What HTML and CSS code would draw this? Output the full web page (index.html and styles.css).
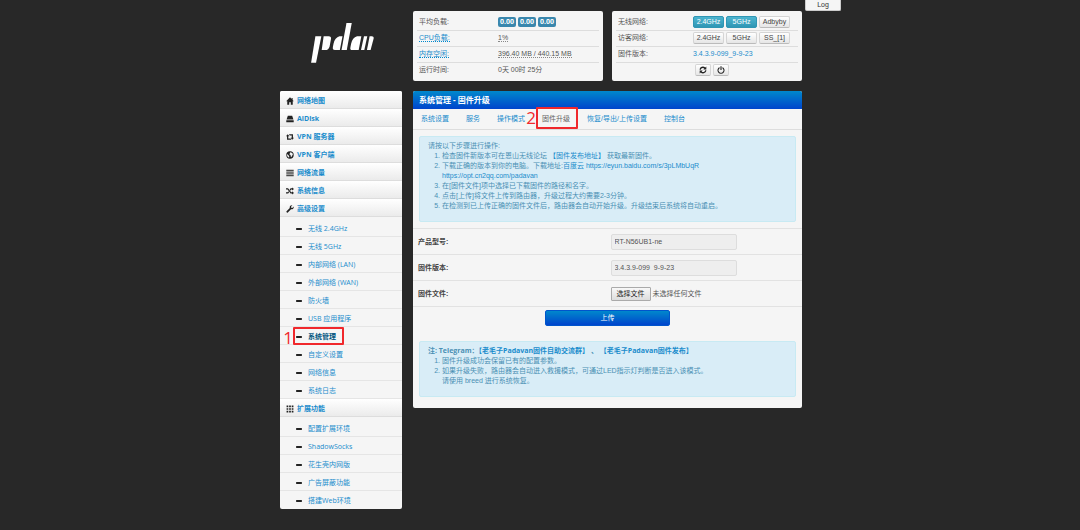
FILE: index.html
```
<!DOCTYPE html>
<html lang="zh-CN">
<head>
    <meta charset="UTF-8">
    <meta name="viewport" content="width=device-width, initial-scale=1.0">
    <title>系统管理 - 固件升级</title>
    <link rel="stylesheet" href="styles.css">
</head>
<body>

<!-- Icons -->
<svg class="sprite" viewBox="0 0 14 14">
    <symbol id="i-home" viewBox="0 0 14 14"><path d="M7 0.5 0.3 7.4H2.2V13.4H5.6V9H8.4V13.4H11.8V7.4H13.7L11.6 5.2V1.6H9.8V3.4Z"/></symbol>
    <symbol id="i-hdd" viewBox="0 0 14 14"><path d="M3.2 1.5H10.8L13 8H1ZM0.5 9H13.5V12.8H0.5Z"/></symbol>
    <symbol id="i-retweet" viewBox="0 0 14 14"><path d="M3 2.2 6 5.6H4V9.8H8L9.6 12H1.8V5.6H0ZM5 2.2H12.2V8.4H14L11 12 8 8.4H10V4.4H6.6Z"/></symbol>
    <symbol id="i-globe" viewBox="0 0 14 14"><path fill-rule="evenodd" d="M7 0.5A6.5 6.5 0 1 0 7 13.5 6.5 6.5 0 0 0 7 0.5ZM7.4 2.2 11 3.4 12 6.4 10.2 8.6 9.6 10.8 8 9.2 8.2 7.2 6 6.2 6.6 4.2ZM2 5.4 4.4 7.6 5.6 9.4 5.4 11.6 3 10 1.9 7.8Z"/></symbol>
    <symbol id="i-tasks" viewBox="0 0 14 14"><path d="M0.5 1.5H13.5V4.5H0.5ZM0.5 5.5H13.5V8.5H0.5ZM0.5 9.5H13.5V12.5H0.5Z" opacity="0.8"/></symbol>
    <symbol id="i-random" viewBox="0 0 14 14"><path d="M0 2.4H3.6L9 9.4H10.6V7.6L14 10.4 10.6 13.2V11.4H8L2.8 4.4H0ZM0 9.4H2.8L4.2 7.6 5.4 9.2 3.8 11.4H0ZM6.4 4.8 8 2.4H10.6V0.8L14 3.5 10.6 6.2V4.4H9L7.6 6.4Z"/></symbol>
    <symbol id="i-wrench" viewBox="0 0 14 14"><path d="M11.2 0.6 8.8 3 9.2 4.8 11 5.2 13.4 2.8C14 5.6 11.8 8.2 8.8 7.4L3.2 13C1.8 14.2-0.2 12.2 1 10.8L6.6 5.2C5.8 2.2 8.4 0 11.2 0.6Z"/></symbol>
    <symbol id="i-th" viewBox="0 0 14 14"><path d="M1 1H4V4H1ZM5.5 1H8.5V4H5.5ZM10 1H13V4H10ZM1 5.5H4V8.5H1ZM5.5 5.5H8.5V8.5H5.5ZM10 5.5H13V8.5H10ZM1 10H4V13H1ZM5.5 10H8.5V13H5.5ZM10 10H13V13H10Z"/></symbol>
    <symbol id="i-minus" viewBox="0 0 14 14"><path d="M2 5.2H12V8.8H2Z"/></symbol>
    <symbol id="i-refresh" viewBox="0 0 14 14"><path d="M1 6.4C1.4 1.4 7.6-0.8 11 2.8L12.8 1V6.2H7.6L9.4 4.4C7 2.2 3.4 3.6 3.2 6.4ZM13 7.6C12.6 12.6 6.4 14.8 3 11.2L1.2 13V7.8H6.4L4.6 9.6C7 11.8 10.6 10.4 10.8 7.6Z"/></symbol>
    <symbol id="i-off" viewBox="0 0 14 14"><path d="M6 0.4H8V7H6ZM4.4 1.8V4.2A4.2 4.2 0 1 0 9.6 4.2V1.8A6.2 6.2 0 1 1 4.4 1.8Z"/></symbol>
</svg>

<div class="wrapper">
    <button class="log-button" type="button">Log</button>

    <header class="header">
        <div class="logo">
            <svg viewBox="122 68 190 121" role="img" aria-label="pdcn">
                <path d="M135 108H153L137 188H122Z"/>
                <path d="M160 108H175Q184 108 182 117L178 139Q175 150 165 150H154Z"/>
                <path d="M208 108H217L209 150H194Q186 150 188 140L190 130Q194 112 208 108Z"/>
                <path d="M229 68H245L230 150H214Z"/>
                <path d="M261 108H274L266 150H246Q239 150 241 141L243 131Q247 112 261 108Z"/>
                <path d="M282 108H292L283 150H273Z"/>
                <path d="M299 108H306Q313 108 311 116L302 150H291Z"/>
            </svg>
        </div>

        <div class="status">
            <table class="status-table">
                <tr><th>平均负载:</th><td><span class="label">0.00</span> <span class="label">0.00</span> <span class="label">0.00</span></td></tr>
                <tr><th><a class="hint" href="#">CPU负载:</a></th><td><span class="hint">1%</span></td></tr>
                <tr><th><a class="hint" href="#">内存空闲:</a></th><td><span class="hint">396.40 MB / 440.15 MB</span></td></tr>
                <tr><th>运行时间:</th><td>0天 00时 25分</td></tr>
            </table>
        </div>

        <div class="status status-net">
            <table class="status-table">
                <tr>
                    <th>无线网络:</th>
                    <td><div class="buttons"><button class="mini info" type="button">2.4GHz</button><button class="mini info" type="button">5GHz</button><button class="mini" type="button">Adbyby</button></div></td>
                </tr>
                <tr>
                    <th>访客网络:</th>
                    <td><div class="buttons"><button class="mini" type="button">2.4GHz</button><button class="mini" type="button">5GHz</button><button class="mini" type="button">SS_[1]</button></div></td>
                </tr>
                <tr><th>固件版本:</th><td><a href="#">3.4.3.9-099_9-9-23</a></td></tr>
                <tr>
                    <th></th>
                    <td>
                        <div class="buttons tools">
                            <button class="mini square" type="button" aria-label="刷新"><svg class="icon"><use href="#i-refresh"/></svg></button>
                            <button class="mini square" type="button" aria-label="关机"><svg class="icon"><use href="#i-off"/></svg></button>
                        </div>
                    </td>
                </tr>
            </table>
        </div>
    </header>

    <div class="content">
        <nav class="sidebar">
            <ul class="menu">
                <li><a href="#"><svg class="icon"><use href="#i-home"/></svg>网络地图</a></li>
                <li><a href="#"><svg class="icon"><use href="#i-hdd"/></svg>AiDisk</a></li>
                <li><a href="#"><svg class="icon"><use href="#i-retweet"/></svg>VPN 服务器</a></li>
                <li><a href="#"><svg class="icon"><use href="#i-globe"/></svg>VPN 客户端</a></li>
                <li><a href="#"><svg class="icon"><use href="#i-tasks"/></svg>网络流量</a></li>
                <li><a href="#"><svg class="icon"><use href="#i-random"/></svg>系统信息</a></li>
                <li>
                    <a href="#"><svg class="icon"><use href="#i-wrench"/></svg>高级设置</a>
                    <ul class="submenu">
                        <li><a href="#"><svg class="icon"><use href="#i-minus"/></svg>无线 2.4GHz</a></li>
                        <li><a href="#"><svg class="icon"><use href="#i-minus"/></svg>无线 5GHz</a></li>
                        <li><a href="#"><svg class="icon"><use href="#i-minus"/></svg>内部网络 (LAN)</a></li>
                        <li><a href="#"><svg class="icon"><use href="#i-minus"/></svg>外部网络 (WAN)</a></li>
                        <li><a href="#"><svg class="icon"><use href="#i-minus"/></svg>防火墙</a></li>
                        <li><a href="#"><svg class="icon"><use href="#i-minus"/></svg>USB 应用程序</a></li>
                        <li class="active"><a href="#"><svg class="icon"><use href="#i-minus"/></svg>系统管理</a><span class="mark mark-menu"><b>1</b></span></li>
                        <li><a href="#"><svg class="icon"><use href="#i-minus"/></svg>自定义设置</a></li>
                        <li><a href="#"><svg class="icon"><use href="#i-minus"/></svg>网络信息</a></li>
                        <li><a href="#"><svg class="icon"><use href="#i-minus"/></svg>系统日志</a></li>
                    </ul>
                </li>
                <li>
                    <a href="#"><svg class="icon"><use href="#i-th"/></svg>扩展功能</a>
                    <ul class="submenu">
                        <li><a href="#"><svg class="icon"><use href="#i-minus"/></svg>配置扩展环境</a></li>
                        <li><a href="#"><svg class="icon"><use href="#i-minus"/></svg>ShadowSocks</a></li>
                        <li><a href="#"><svg class="icon"><use href="#i-minus"/></svg>花生壳内网版</a></li>
                        <li><a href="#"><svg class="icon"><use href="#i-minus"/></svg>广告屏蔽功能</a></li>
                        <li><a href="#"><svg class="icon"><use href="#i-minus"/></svg>搭建Web环境</a></li>
                    </ul>
                </li>
            </ul>
        </nav>

        <main class="box">
            <h2>系统管理 - 固件升级</h2>
            <ul class="tabs">
                <li><a href="#">系统设置</a></li>
                <li><a href="#">服务</a></li>
                <li><a href="#">操作模式</a></li>
                <li class="active"><a href="#">固件升级</a><span class="mark mark-tab"><b>2</b></span></li>
                <li><a href="#">恢复/导出/上传设置</a></li>
                <li><a href="#">控制台</a></li>
            </ul>

            <div class="alert">
                请按以下步骤进行操作:
                <ol>
                    <li>检查固件新版本可在恩山无线论坛 <a href="#">【固件发布地址】</a> 获取最新固件。</li>
                    <li>下载正确的版本到你的电脑。下载地址:<a href="#">百度云 https://eyun.baidu.com/s/3pLMbUqR</a><br><a href="#">https://opt.cn2qq.com/padavan</a></li>
                    <li>在[固件文件]项中选择已下载固件的路径和名字。</li>
                    <li>点击[上传]将文件上传到路由器，升级过程大约需要2-3分钟。</li>
                    <li>在检测到已上传正确的固件文件后，路由器会自动开始升级。升级结束后系统将自动重启。</li>
                </ol>
            </div>

            <form onsubmit="return false">
                <table class="form-table">
                    <tr>
                        <th><label for="product">产品型号:</label></th>
                        <td><input type="text" id="product" value="RT-N56UB1-ne" readonly></td>
                    </tr>
                    <tr>
                        <th><label for="version">固件版本:</label></th>
                        <td><input type="text" id="version" value="3.4.3.9-099_9-9-23" readonly></td>
                    </tr>
                    <tr>
                        <th>固件文件:</th>
                        <td>
                            <div class="file">
                                <input type="file" id="file">
                                <label class="file-button" for="file">选择文件</label>
                                <span>未选择任何文件</span>
                            </div>
                        </td>
                    </tr>
                </table>
                <div class="actions">
                    <button class="upload-button" type="submit">上传</button>
                </div>
            </form>

            <div class="alert note">
                <strong>注: Telegram：<a href="#">【老毛子Padavan固件自助交流群】</a> 、 <a href="#">【老毛子Padavan固件发布】</a></strong>
                <ol>
                    <li>固件升级成功会保留已有的配置参数。</li>
                    <li>如果升级失败，路由器会自动进入救援模式，可通过LED指示灯判断是否进入该模式。<br>请使用 breed 进行系统恢复。</li>
                </ol>
            </div>
        </main>
    </div>
</div>

</body>
</html>
```
FILE: styles.css
```
* {
    box-sizing: border-box;
}
body {
    margin: 0;
    background-color: #282828;
    color: #555;
    font-family: "Liberation Sans", "Noto Sans CJK SC", sans-serif;
    font-size: 7px;
    line-height: 10px;
}
a {
    color: #1a8ccc;
    text-decoration: none;
}
ul, ol {
    margin: 0;
    padding: 0;
}
ul {
    list-style: none;
}
button, input {
    font-family: inherit;
    font-size: 7px;
    line-height: 10px;
}
button {
    cursor: pointer;
}
table {
    width: 100%;
    border-collapse: collapse;
}
.sprite {
    display: none;
}
.icon {
    width: 8px;
    height: 8px;
    fill: #222;
    flex: none;
}
.wrapper {
    position: relative;
    max-width: 524px;
    margin: 0 auto;
    padding: 11px 0 0 2px;
}
.log-button {
    position: absolute;
    top: 0;
    left: 100%;
    width: 36px;
    height: 11px;
    margin-left: 3px;
    padding: 0;
    border: 1px solid #ccc;
    border-top: none;
    border-radius: 0 0 2px 2px;
    background-color: #f5f5f5;
    color: #333;
}

/* Header */
.header {
    display: grid;
    grid-template-columns: 124px 1fr 1fr;
    column-gap: 9px;
    margin-bottom: 10px;
}
.logo {
    padding: 12px 0 0 31px;
}
.logo svg {
    display: block;
    width: 63px;
    height: 40px;
    fill: #fff;
}
.status {
    padding: 3px 4px;
    border-radius: 2px;
    background-color: #f5f5f5;
}
.status-table th {
    width: 79px;
    font-weight: normal;
    text-align: left;
}
.status-net th {
    width: 75px;
}
.status-table th, .status-table td {
    height: 16px;
    padding: 0 2px;
    border-bottom: 1px solid #ddd;
}
.status-table tr:last-child th, .status-table tr:last-child td {
    border-bottom: none;
}
.hint {
    border-bottom: 1px dotted #888;
}
a.hint {
    border-bottom-color: #0088cc;
}
.label {
    display: inline-block;
    padding: 0 2px;
    border-radius: 2px;
    background-color: #3a87ad;
    color: #fff;
    font-family: "Open Sans", sans-serif;
    font-weight: bold;
}
.buttons {
    display: grid;
    grid-template-columns: repeat(3, 31px);
    column-gap: 2px;
}
.buttons.tools {
    grid-template-columns: 16px 16px;
    padding-left: 2px;
}
.mini {
    height: 12px;
    padding: 0;
    border: 1px solid #d5d5d5;
    border-bottom-color: #bbb;
    border-radius: 2px;
    background-image: linear-gradient(#fff, #e6e6e6);
    color: #444;
}
.mini.info {
    border-color: #2f96b4;
    background-image: linear-gradient(#4db5d0, #2f96b4);
    color: #fff;
}
.mini.square {
    display: flex;
    align-items: center;
    justify-content: center;
}

/* Sidebar */
.content {
    display: grid;
    grid-template-columns: 122px 1fr;
    column-gap: 11px;
    align-items: start;
    padding-bottom: 20px;
}
.sidebar {
    border-radius: 2px;
    background-color: #f5f5f5;
    font-family: "Open Sans", "Noto Sans CJK SC", sans-serif;
}
.menu a {
    display: flex;
    align-items: center;
    gap: 3px;
    height: 18px;
    padding: 2px 0 0 6px;
    border-bottom: 1px solid #ddd;
    background-image: linear-gradient(#fff, #ebebeb);
    font-weight: bold;
}
.menu > li:first-child > a {
    border-radius: 2px 2px 0 0;
}
.submenu {
    padding-top: 2px;
}
.submenu li {
    position: relative;
}
.submenu a {
    gap: 5px;
    padding-left: 15px;
    border-bottom-color: #e5e5e5;
    background-image: none;
    font-weight: normal;
}
.submenu .active a {
    color: #005580;
    font-weight: bold;
}
.menu > li:last-child li:last-child a {
    border-bottom: none;
}

/* Main box */
.box {
    border-radius: 2px;
    background-color: #f5f5f5;
    padding-bottom: 11px;
}
.box h2 {
    margin: 0;
    padding-left: 6px;
    border-radius: 2px 2px 0 0;
    background-image: linear-gradient(#0088cc, #0044cc);
    color: #fff;
    font-family: "Open Sans", "Noto Sans CJK SC", sans-serif;
    font-size: 8px;
    line-height: 18px;
}
.tabs {
    display: flex;
    gap: 17px;
    padding: 0 8px;
    border-bottom: 1px solid #ddd;
    line-height: 20px;
}
.tabs li {
    position: relative;
}
.tabs .active a {
    color: #666;
}
.alert {
    margin: 6px;
    padding: 4px 8px 10px;
    border: 1px solid #c8eaf3;
    border-radius: 2px;
    background-color: #d9edf7;
    color: #4a90b4;
}
.alert ol {
    padding-left: 14px;
}
.alert strong {
    font-family: "Open Sans", "Noto Sans CJK SC", sans-serif;
}
.note {
    margin: 15px 6px 0;
}
.form-table th, .form-table td {
    width: 50%;
    height: 26px;
    padding: 0 3px;
    border-top: 1px solid #e2e2e2;
    border-bottom: 1px solid #e2e2e2;
    text-align: left;
}
.form-table th {
    padding-left: 5px;
    color: #444;
}
.form-table input[type="text"] {
    display: block;
    width: 126px;
    height: 16px;
    padding: 0 3px 1px;
    border: 1px solid #ddd;
    border-radius: 2px;
    background-color: #eee;
    color: #555;
    line-height: 13px;
}
.file {
    display: flex;
    align-items: center;
    gap: 2px;
}
.file input {
    position: absolute;
    width: 1px;
    height: 1px;
    opacity: 0;
}
.file-button {
    padding: 1px 5px;
    border: 1px solid #aaa;
    border-radius: 1px;
    background-image: linear-gradient(#f8f8f8, #ddd);
    color: #222;
}
.actions {
    padding-top: 3px;
    text-align: center;
}
.upload-button {
    width: 125px;
    height: 16px;
    padding: 0;
    border: 1px solid #0055cc;
    border-radius: 2px;
    background-image: linear-gradient(#0088cc, #0044cc);
    color: #fff;
    vertical-align: top;
}

/* Step marks */
.mark {
    position: absolute;
    border: 2px solid #f0282c;
    border-radius: 1px;
    color: #f0282c;
    font-family: "Open Sans", sans-serif;
    font-size: 17px;
    line-height: 17px;
    pointer-events: none;
}
.mark b {
    position: absolute;
    right: 100%;
    top: 0;
    margin-right: 2px;
    font-weight: normal;
}
.mark-menu {
    top: 0;
    left: 13px;
    width: 51px;
    height: 18px;
}
.mark-tab {
    top: -2px;
    left: -6px;
    width: 42px;
    height: 22px;
}
```
